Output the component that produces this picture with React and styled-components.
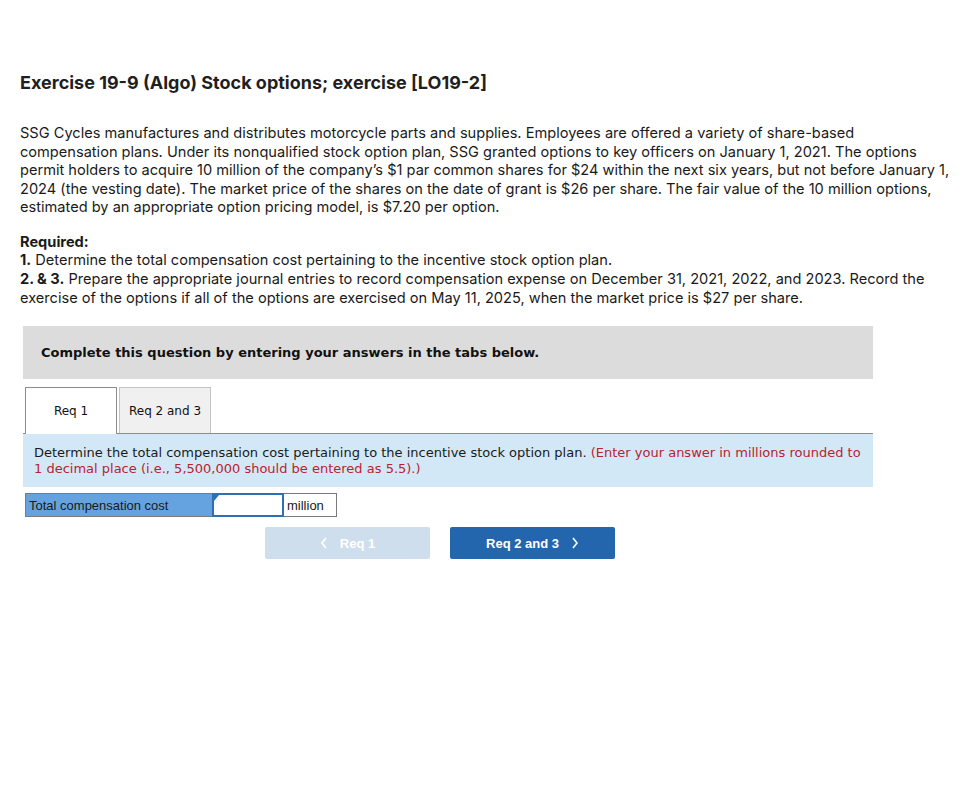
import React from "react";
import styled, { createGlobalStyle } from "styled-components";

const GlobalStyle = createGlobalStyle`
  html, body {
    margin: 0;
    padding: 0;
    background: #fff;
  }
  body {
    font-family: "Inter", "Lato", "Liberation Sans", sans-serif;
    color: #1a1a1a;
  }
`;

const Page = styled.div`
  width: 932px;
  padding: 72px 20px 40px 20px;
`;

const Title = styled.h2`
  margin: 0 0 30px 0;
  font-size: 18px;
  font-weight: 700;
  line-height: 22px;
  color: #1f1f1f;
`;

const Paragraph = styled.p`
  margin: 0;
  font-size: 14.6px;
  line-height: 18.5px;
`;

const Required = styled.div`
  margin-top: 16px;
  font-size: 14.6px;
  line-height: 18.7px;
`;

const Bold = styled.b`
  font-weight: 700;
`;

const Question = styled.div`
  margin: 19px 0 0 3px;
  width: 850px;
  font-family: "DejaVu Sans", Verdana, sans-serif;
`;

const Banner = styled.div`
  background: #dcdcdc;
  height: 53px;
  display: flex;
  align-items: center;
  padding-left: 18px;
  font-size: 13px;
  font-weight: 700;
  color: #111;
`;

const TabBar = styled.div`
  display: flex;
  gap: 2px;
  padding: 8px 0 0 2px;
  border-bottom: 1px solid #8c8c8c;
`;

const Tab = styled.div`
  width: 92px;
  box-sizing: border-box;
  display: flex;
  align-items: center;
  justify-content: center;
  font-size: 12px;
  color: #111;
  background: ${(p) => (p.$active ? "#fff" : "#f0f0f0")};
  border: 1px solid ${(p) => (p.$active ? "#8c8c8c" : "#c4c4c4")};
  border-bottom: none;
  margin-bottom: ${(p) => (p.$active ? "-1px" : "0")};
  height: ${(p) => (p.$active ? "47px" : "46px")};
`;

const Instructions = styled.div`
  background: #d3e8f6;
  padding: 11px 11px 10px 11px;
  font-size: 13px;
  line-height: 16px;
  color: #1a1a1a;
`;

const Hint = styled.span`
  color: #b8232f;
`;

const AnswerRow = styled.div`
  display: flex;
  margin: 6px 0 0 2px;
  font-family: "Liberation Sans", Arial, sans-serif;
  font-size: 13px;
`;

const Label = styled.div`
  width: 187px;
  height: 24px;
  box-sizing: border-box;
  background: #64a3df;
  border: 1px solid #7a7a7a;
  border-right: none;
  display: flex;
  align-items: center;
  padding-left: 3px;
  color: #1a1a1a;
`;

const InputCell = styled.div`
  position: relative;
  width: 72px;
  height: 24px;
  box-sizing: border-box;
  background: #fff;
  border: 2px solid #2f6fb3;
`;

const Flag = styled.span`
  position: absolute;
  left: 0;
  top: 0;
  width: 0;
  height: 0;
  border-top: 6px solid #2f6fb3;
  border-right: 5px solid transparent;
`;

const Unit = styled.div`
  width: 53px;
  height: 24px;
  box-sizing: border-box;
  border: 1px solid #7a7a7a;
  border-left: none;
  display: flex;
  align-items: center;
  padding-left: 3px;
  background: #fff;
`;

const Nav = styled.div`
  display: flex;
  justify-content: center;
  gap: 20px;
  margin-top: 10px;
  padding-right: 16px;
`;

const NavButton = styled.button`
  width: 165px;
  height: 32px;
  border: none;
  border-radius: 2px;
  background: ${(p) => (p.$disabled ? "#cfdeed" : "#2466ad")};
  color: #fff;
  font-family: "Liberation Sans", Arial, sans-serif;
  font-size: 13px;
  font-weight: 700;
  display: flex;
  align-items: center;
  justify-content: center;
  gap: 12px;
  cursor: ${(p) => (p.$disabled ? "default" : "pointer")};
`;

const Chevron = ({ dir }) => (
  <svg width="8" height="12" viewBox="0 0 8 12">
    <path
      d={dir === "left" ? "M6 1 L2 6 L6 11" : "M2 1 L6 6 L2 11"}
      fill="none"
      stroke="#fff"
      strokeWidth="1.6"
    />
  </svg>
);

export default function App() {
  return (
    <>
      <GlobalStyle />
      <Page>
        <Title>Exercise 19-9 (Algo) Stock options; exercise [LO19-2]</Title>
        <Paragraph>
          SSG Cycles manufactures and distributes motorcycle parts and supplies. Employees are offered a variety of share-based
          <br />
          compensation plans. Under its nonqualified stock option plan, SSG granted options to key officers on January 1, 2021. The options
          <br />
          permit holders to acquire 10 million of the company’s $1 par common shares for $24 within the next six years, but not before January 1,
          <br />
          2024 (the vesting date). The market price of the shares on the date of grant is $26 per share. The fair value of the 10 million options,
          <br />
          estimated by an appropriate option pricing model, is $7.20 per option.
        </Paragraph>
        <Required>
          <Bold>Required:</Bold>
          <br />
          <Bold>1.</Bold> Determine the total compensation cost pertaining to the incentive stock option plan.
          <br />
          <Bold>2. &amp; 3.</Bold> Prepare the appropriate journal entries to record compensation expense on December 31, 2021, 2022, and 2023. Record the
          <br />
          exercise of the options if all of the options are exercised on May 11, 2025, when the market price is $27 per share.
        </Required>
        <Question>
          <Banner>Complete this question by entering your answers in the tabs below.</Banner>
          <TabBar>
            <Tab $active>Req 1</Tab>
            <Tab>Req 2 and 3</Tab>
          </TabBar>
          <Instructions>
            Determine the total compensation cost pertaining to the incentive stock option plan.{" "}
            <Hint>
              (Enter your answer in millions rounded to
              <br />1 decimal place (i.e., 5,500,000 should be entered as 5.5).)
            </Hint>
          </Instructions>
          <AnswerRow>
            <Label>Total compensation cost</Label>
            <InputCell>
              <Flag />
            </InputCell>
            <Unit>million</Unit>
          </AnswerRow>
          <Nav>
            <NavButton $disabled>
              <Chevron dir="left" />
              Req 1
            </NavButton>
            <NavButton>
              Req 2 and 3
              <Chevron dir="right" />
            </NavButton>
          </Nav>
        </Question>
      </Page>
    </>
  );
}
